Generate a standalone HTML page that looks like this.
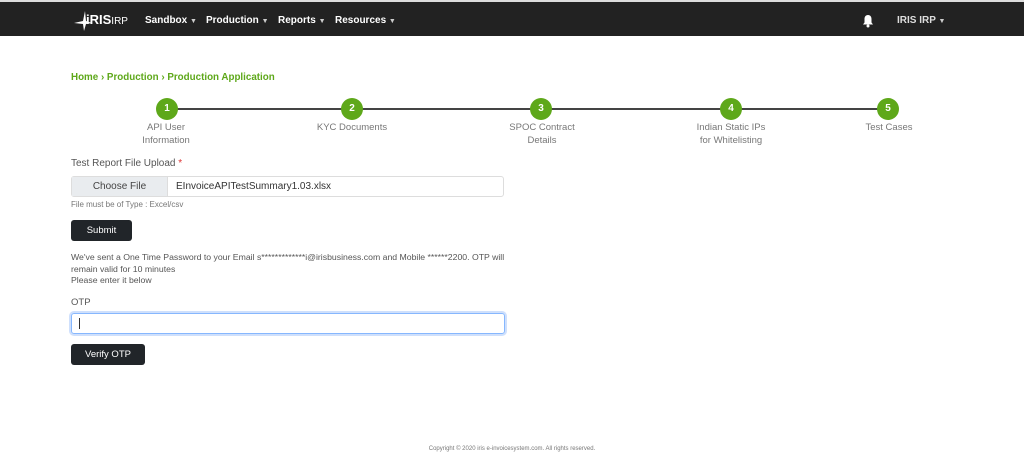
<!DOCTYPE html>
<html><head><style>
body{margin:0;width:1024px;height:465px;background:#fff;font-family:"Liberation Sans",sans-serif;position:relative;overflow:hidden}
.nav{position:absolute;left:0;top:0;width:1024px;height:36px;background:#222;border-top:2px solid #ddd;box-sizing:border-box}
.nav a{position:absolute;top:13px;color:#fff;font-size:10px;font-weight:bold}
.nav a i{font-style:normal;font-size:7px;color:#ccc}
.a{position:absolute;color:#555}
.c{position:absolute;width:22px;height:22px;border-radius:50%;background:#5ea81a;color:#fff;font-size:10px;font-weight:bold;text-align:center;line-height:22px;top:98px}
.lbl{position:absolute;top:121px;font-size:9.5px;color:#777;text-align:center;width:120px;line-height:13px}
.btn{position:absolute;background:#212529;color:#fff;font-size:9.5px;border-radius:3px;text-align:center}
</style></head><body>
<div class="nav">
<svg style="position:absolute;left:72px;top:7px" width="22" height="22" viewBox="0 0 22 22"><path d="M2 14 L11 12 L13 2 L14 12 L20 14 L14 15 L12 22 L11 15 Z" fill="#fff"/></svg>
<span style="position:absolute;left:86px;top:10px;color:#fff;font-size:13px;font-weight:bold">iRIS<span style="font-weight:normal;font-size:10px">IRP</span></span>
<a style="left:145px">Sandbox <i>▼</i></a><a style="left:206px">Production <i>▼</i></a><a style="left:278px">Reports <i>▼</i></a><a style="left:335px">Resources <i>▼</i></a>
<svg style="position:absolute;left:862px;top:12px" width="12" height="14" viewBox="0 0 12 14"><path d="M6 1C3.5 1 2.5 3 2.5 5V8.5L1 10.5H11L9.5 8.5V5C9.5 3 8.5 1 6 1Z" fill="#fff"/><circle cx="6" cy="12" r="1.5" fill="#fff"/></svg>
<a style="left:897px;color:#ddd">IRIS IRP <i>▼</i></a>
</div>
<div style="position:absolute;left:71px;top:72px;font-size:9.8px;font-weight:bold;color:#5ea81a">Home › Production › Production Application</div>
<div style="position:absolute;left:167px;top:108px;width:721px;height:2px;background:#444"></div>
<div class="c" style="left:156px">1</div><div class="c" style="left:341px">2</div><div class="c" style="left:530px">3</div><div class="c" style="left:720px">4</div><div class="c" style="left:877px">5</div>
<div class="lbl" style="left:106px">API User<br>Information</div>
<div class="lbl" style="left:292px">KYC Documents</div>
<div class="lbl" style="left:482px">SPOC Contract<br>Details</div>
<div class="lbl" style="left:671px">Indian Static IPs<br>for Whitelisting</div>
<div class="lbl" style="left:829px">Test Cases</div>
<div class="a" style="left:71px;top:158px;font-size:10px">Test Report File Upload <span style="color:#d33">*</span></div>
<div style="position:absolute;left:71px;top:176px;width:433px;height:21px;border:1px solid #ddd;border-radius:3px;box-sizing:border-box;font-size:10px">
<div style="position:absolute;left:0;top:0;width:95px;height:19px;background:#e9ecef;border-right:1px solid #ddd;line-height:19px;text-align:center;color:#444">Choose File</div>
<div style="position:absolute;left:104px;top:0;line-height:19px;color:#333">EInvoiceAPITestSummary1.03.xlsx</div></div>
<div class="a" style="left:71px;top:200px;font-size:8px;color:#777">File must be of Type : Excel/csv</div>
<div class="btn" style="left:71px;top:220px;width:61px;height:21px;line-height:21px">Submit</div>
<div class="a" style="left:71px;top:252px;font-size:8.7px;line-height:11.5px;color:#555">We've sent a One Time Password to your Email s*************i@irisbusiness.com and Mobile ******2200. OTP will<br>remain valid for 10 minutes<br>Please enter it below</div>
<div class="a" style="left:71px;top:297px;font-size:9.5px">OTP</div>
<div style="position:absolute;left:71px;top:313px;width:434px;height:21px;border:1px solid #86b7fe;box-shadow:0 0 0 2px #cfe0fc;border-radius:3px;box-sizing:border-box"><div style="position:absolute;left:7px;top:4px;width:1px;height:11px;background:#333"></div></div>
<div class="btn" style="left:71px;top:344px;width:74px;height:21px;line-height:21px">Verify OTP</div>
<div style="position:absolute;left:0;width:1024px;top:446px;text-align:center;font-size:6px;color:#777">Copyright © 2020 iris e-invoicesystem.com. All rights reserved.</div>
</body></html>
